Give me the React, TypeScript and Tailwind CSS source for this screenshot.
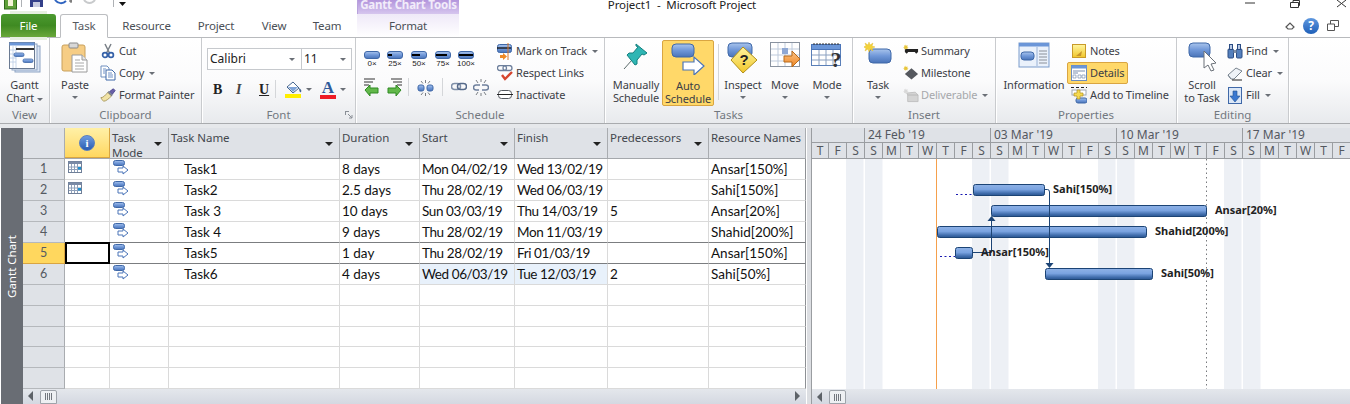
import React from "react";

const UI = "[font-family:'Noto_Sans',sans-serif]";

function Caret({ className = "" }: { className?: string }) {
  return <span className={"inline-block w-0 h-0 border-l-[3px] border-r-[3px] border-t-[3px] border-l-transparent border-r-transparent border-t-[#6a6f76] " + className} />;
}

function Defs() {
  return (
    <svg className="absolute w-0 h-0" aria-hidden="true">
      <defs>
        <linearGradient id="pill" x1="0" y1="0" x2="0" y2="1">
          <stop offset="0" stopColor="#a9c4ec" />
          <stop offset="0.5" stopColor="#6f97d8" />
          <stop offset="1" stopColor="#4a74b8" />
        </linearGradient>
        <linearGradient id="bar" x1="0" y1="0" x2="0" y2="1">
          <stop offset="0" stopColor="#8fb2e6" />
          <stop offset="0.45" stopColor="#7aa3e0" />
          <stop offset="0.8" stopColor="#3f6cab" />
          <stop offset="1" stopColor="#2a5590" />
        </linearGradient>
        <linearGradient id="orangeA" x1="0" y1="0" x2="0" y2="1">
          <stop offset="0" stopColor="#fbc489" />
          <stop offset="1" stopColor="#ee8420" />
        </linearGradient>
        <linearGradient id="yellowD" x1="0" y1="0" x2="0" y2="1">
          <stop offset="0" stopColor="#fff6a0" />
          <stop offset="1" stopColor="#f1c62a" />
        </linearGradient>
      </defs>
    </svg>
  );
}

function Pill({ x, y, w, h, r = 2 }: { x: number; y: number; w: number; h: number; r?: number }) {
  return <rect x={x} y={y} width={w} height={h} rx={r} fill="url(#pill)" stroke="#3f68a8" strokeWidth="0.8" />;
}

function GanttIcon() {
  return (
    <svg width="34" height="32" viewBox="0 0 34 32">
      <rect x="7" y="4" width="25" height="26" fill="#dbe5f4" stroke="#8ea4c4" />
      <rect x="4" y="2" width="25" height="26" fill="#eef3fa" stroke="#8ea4c4" />
      <rect x="1.5" y="0.5" width="25" height="26" fill="#fff" stroke="#6a7a92" />
      <rect x="1.5" y="0.5" width="25" height="3" fill="#6b96d8" />
      <path d="M2 8h6M2 12h6M2 16h6M2 20h6M8 4v22M5 4v22" stroke="#b9cbe4" strokeWidth="0.8" />
      <path d="M8 7h18" stroke="#000" strokeWidth="1.6" />
      <Pill x={6} y={11} w={10} h={3.5} r={1.5} />
      <Pill x={15} y={17} w={10} h={3.5} r={1.5} />
    </svg>
  );
}
function PasteIcon() {
  return (
    <svg width="28" height="32" viewBox="0 0 28 32">
      <rect x="1" y="3" width="23" height="26" rx="2" fill="#f6cd85" stroke="#c8a05c" />
      <rect x="8" y="1" width="9" height="5" rx="1" fill="#d8d8d8" stroke="#8a8a8a" />
      <path d="M11 29V13h10l5 5v12H11z" fill="#fff" stroke="#9a9a9a" />
      <path d="M21 13v5h5" fill="#e6e6e6" stroke="#9a9a9a" />
      <path d="M14 18h5M14 21h9M14 24h9M14 27h9" stroke="#a8a8a8" />
    </svg>
  );
}
function ScissorsIcon() {
  return (
    <svg width="16" height="16" viewBox="0 0 16 16">
      <path d="M5 1l4.5 9M11 1L6.5 10" stroke="#7a8088" strokeWidth="1.5" fill="none" />
      <circle cx="5" cy="12" r="2.4" fill="none" stroke="#3561a8" strokeWidth="1.7" />
      <circle cx="11" cy="12" r="2.4" fill="none" stroke="#3561a8" strokeWidth="1.7" />
    </svg>
  );
}
function CopyIcon() {
  return (
    <svg width="16" height="16" viewBox="0 0 16 16">
      <path d="M1 1h6l2 2v9H1z" fill="#fff" stroke="#6f8fbf" />
      <path d="M6 5h6l3 3v7H6z" fill="#fff" stroke="#3f68a8" />
      <path d="M3 4h3M3 6h2M3 8h2M8 8h4M8 10h5M8 12h5" stroke="#4a74b8" strokeWidth="0.8" />
    </svg>
  );
}
function BrushIcon() {
  return (
    <svg width="18" height="16" viewBox="0 0 18 16">
      <path d="M1 11c3 0 5-3 8-6l4 4c-3 3-6 6-9 6-1-1-2-2-3-4z" fill="#f1e3a6" stroke="#a5955a" />
      <path d="M9 5l4 4 1-1-4-4z" fill="#9a9fae" stroke="#5d6272" />
      <path d="M11 4l4-3 2 2-3 4z" fill="#6a5fa8" stroke="#44408a" />
    </svg>
  );
}
function Bucket() {
  return (
    <svg width="17" height="18" viewBox="0 0 17 18">
      <path d="M2 7l6-5 6 6-6 5z" fill="#fff" stroke="#44658f" />
      <path d="M3 7h10l-5 5z" fill="#7fa4d8" />
      <path d="M14 8c2 1 3 3 2 4s-2-1-2-4z" fill="#44658f" />
      <rect x="0" y="14" width="16" height="4" fill="#ffee00" />
    </svg>
  );
}
function MiniBar({ x, pct, fill }: { x: number; pct: string; fill: number }) {
  return (
    <div className="w-[16px] flex flex-col items-center" style={{ marginLeft: x }}>
      <svg width="16" height="8" viewBox="0 0 16 8">
        <rect x="0.5" y="0.5" width="15" height="7" rx="2.5" fill="url(#pill)" stroke="#3f68a8" />
        {fill > 0 && <rect x="1" y="3" width={fill} height="2" fill="#000" />}
      </svg>
      <span className="text-[8px] leading-[9px] text-[#222] whitespace-nowrap [font-family:'Liberation_Sans',sans-serif]">{pct}</span>
    </div>
  );
}
function IndentOut() {
  return (
    <svg width="16" height="18" viewBox="0 0 16 18">
      <path d="M0 1h11M0 4h9M0 7h5" stroke="#333" />
      <path d="M1 12l5-5v3h8v5H6v3z" fill="#62b84a" stroke="#2f8a22" />
    </svg>
  );
}
function IndentIn() {
  return (
    <svg width="16" height="18" viewBox="0 0 16 18">
      <path d="M5 1h11M7 4h9M11 7h5" stroke="#333" />
      <path d="M15 12l-5-5v3H2v5h8v3z" fill="#62b84a" stroke="#2f8a22" />
    </svg>
  );
}
function SplitIcon() {
  return (
    <svg width="17" height="17" viewBox="0 0 17 17">
      <rect x="1" y="6" width="6" height="6" rx="2" fill="url(#pill)" stroke="#3f68a8" />
      <rect x="10" y="6" width="6" height="6" rx="2" fill="url(#pill)" stroke="#3f68a8" />
      <path d="M8.5 1v3M4 2l2 2.5M13 2l-2 2.5M8.5 14v3M4 16l2-2.5M13 16l-2-2.5" stroke="#5a5f66" strokeWidth="0.8" />
    </svg>
  );
}
function LinkIcon() {
  return (
    <svg width="16" height="10" viewBox="0 0 16 10">
      <rect x="0.5" y="1.5" width="9" height="6" rx="3" fill="none" stroke="#7f8fa8" strokeWidth="1.5" />
      <rect x="6.5" y="1.5" width="9" height="6" rx="3" fill="none" stroke="#566a8a" strokeWidth="1.5" />
    </svg>
  );
}
function UnlinkIcon() {
  return (
    <svg width="16" height="17" viewBox="0 0 16 17">
      <path d="M7 6H3a2.5 2.5 0 0 0 0 5h3M9 6h4a2.5 2.5 0 0 1 0 5H9" fill="none" stroke="#6d7f9c" strokeWidth="1.5" />
      <path d="M8 0v3M3 1l2 3M13 1l-2 3M8 14v3M3 16l2-3M13 16l-2-3" stroke="#5a5f66" strokeWidth="0.8" />
    </svg>
  );
}
function MarkIcon() {
  return (
    <svg width="16" height="17" viewBox="0 0 16 17">
      <rect x="0.5" y="1.5" width="14" height="8" rx="2" fill="url(#pill)" stroke="#3f68a8" />
      <path d="M0 5h14" stroke="#111" strokeWidth="1.3" />
      <path d="M11 0v17" stroke="#d9782a" />
      <path d="M3 12h3v-2l4 3.5-4 3.5v-2H3z" fill="#ef8a26" />
    </svg>
  );
}
function RespectIcon() {
  return (
    <svg width="16" height="17" viewBox="0 0 16 17">
      <rect x="0.5" y="0.5" width="9" height="5" rx="2.5" fill="none" stroke="#6d7f9c" strokeWidth="1.3" />
      <rect x="6" y="0.5" width="9" height="5" rx="2.5" fill="none" stroke="#6d7f9c" strokeWidth="1.3" />
      <path d="M5 10l3 4 7-7" fill="none" stroke="#d6452e" strokeWidth="2.4" />
    </svg>
  );
}
function InactiveIcon() {
  return (
    <svg width="16" height="10" viewBox="0 0 16 10">
      <rect x="1.5" y="0.5" width="13" height="8" rx="3" fill="#fff" stroke="#55595f" />
      <path d="M0 4.5h16" stroke="#222" />
    </svg>
  );
}
function PinIcon() {
  return (
    <svg width="26" height="28" viewBox="0 0 26 28">
      <path d="M1 27l8-9" stroke="#5a6a6a" />
      <path d="M13 2l11 9-3 2-2-1-5 6 0 4-2 1L4 13l2-2 4 0 5-6-2-1z" fill="#2fb6b4" stroke="#14807f" />
    </svg>
  );
}
function AutoIcon() {
  return (
    <svg width="34" height="32" viewBox="0 0 34 32">
      <rect x="1" y="1" width="22" height="13" rx="4" fill="url(#pill)" stroke="#3f68a8" />
      <path d="M12 19h11v-5l10 9-10 9v-5H12z" fill="#fff" stroke="#4a74b8" strokeWidth="1.2" />
    </svg>
  );
}
function InspectIcon() {
  return (
    <svg width="32" height="32" viewBox="0 0 32 32">
      <rect x="1" y="1" width="24" height="14" rx="4" fill="url(#pill)" stroke="#3f68a8" />
      <path d="M16 5l14 13-14 13L4 18z" fill="url(#yellowD)" stroke="#b18f1a" />
      <text x="17" y="23" textAnchor="middle" fontSize="15" fontWeight="700" fill="#222" fontFamily="Liberation Sans">?</text>
    </svg>
  );
}
function MoveIcon() {
  return (
    <svg width="31" height="28" viewBox="0 0 31 28">
      <rect x="0.5" y="0.5" width="29" height="24" fill="#fff" stroke="#8a93a0" />
      <path d="M8 1v23M15 1v23M22 1v23M1 7h28M1 13h28M1 19h28" stroke="#bfcbdc" />
      <rect x="12" y="6" width="6" height="6" fill="#8fa8d4" />
      <path d="M14 14h8v-5l8 8-8 8v-5h-8z" fill="url(#orangeA)" stroke="#b86a1a" />
    </svg>
  );
}
function ModeIcon() {
  return (
    <svg width="32" height="30" viewBox="0 0 32 30">
      <rect x="0.5" y="2.5" width="29" height="21" fill="#fff" stroke="#5a7fb8" />
      <rect x="0.5" y="2.5" width="29" height="5" fill="#6b96d8" stroke="#4a74b8" />
      <path d="M3 1v2M6 1v2M9 1v2M12 1v2M15 1v2M18 1v2M21 1v2M24 1v2M27 1v2" stroke="#333" />
      <path d="M8 8v15M15 8v15M22 8v15M1 13h28M1 18h28" stroke="#8aa0c0" />
      <text x="25" y="25" textAnchor="middle" fontSize="22" fontWeight="700" fill="#333" fontFamily="Liberation Serif">?</text>
    </svg>
  );
}
function TaskIcon() {
  return (
    <svg width="28" height="26" viewBox="0 0 28 26">
      <rect x="5" y="7" width="22" height="14" rx="4" fill="url(#pill)" stroke="#3f68a8" />
      <path d="M5 0l1 3 3-2-1 3 3 1-3 1 1 3-3-2-1 3-1-3-3 2 1-3-3-1 3-1-1-3 3 2z" fill="#f3d23a" stroke="#e0b520" strokeWidth="0.4" />
    </svg>
  );
}
function SummaryIcon() {
  return (
    <svg width="17" height="14" viewBox="0 0 17 14">
      <path d="M2 5h14v3l-2 2-1.5-2H5.5L4 10 2 8z" fill="#222" />
      <path d="M3 0l.5 1.5L5 1l-.5 1.5L6 3l-1.5.5L5 5l-1.5-.5L3 6l-.5-1.5L1 5l.5-1.5L0 3l1.5-.5L1 1l1.5.5z" fill="#e7c53a" />
    </svg>
  );
}
function MilestoneIcon() {
  return (
    <svg width="17" height="16" viewBox="0 0 17 16">
      <path d="M9 3l7 6-7 6-7-6z" fill="#55585e" />
      <path d="M3 0l.5 1.5L5 1l-.5 1.5L6 3l-1.5.5L5 5l-1.5-.5L3 6l-.5-1.5L1 5l.5-1.5L0 3l1.5-.5L1 1l1.5.5z" fill="#e7c53a" />
    </svg>
  );
}
function DeliverableIcon() {
  return (
    <svg width="17" height="16" viewBox="0 0 17 16">
      <path d="M4 6l9-1 3 3v7H5V8z" fill="#d4d4d4" stroke="#c0c0c0" />
      <path d="M5 8h11" stroke="#b8b8b8" />
      <path d="M3 1l.5 1.5L5 2l-.5 1.5L6 4l-1.5.5L5 6l-1.5-.5L3 7l-.5-1.5L1 6l.5-1.5L0 4l1.5-.5L1 2l1.5.5z" fill="#d8d8d8" />
    </svg>
  );
}
function InfoIcon() {
  return (
    <svg width="32" height="27" viewBox="0 0 32 27">
      <rect x="1" y="1" width="30" height="24" fill="#eaf1fb" stroke="#7b9bcb" />
      <rect x="1" y="1" width="30" height="3.5" fill="#6b96d8" />
      <rect x="3" y="10" width="13" height="8" rx="3" fill="url(#pill)" stroke="#3f68a8" />
      <path d="M19 5v19" stroke="#9ab2d6" />
      <path d="M21 9h8M21 12h8M21 15h8M21 18h8M21 21h8" stroke="#8a8f98" />
    </svg>
  );
}
function NotesIcon() {
  return (
    <svg width="14" height="14" viewBox="0 0 14 14">
      <rect x="0.5" y="0.5" width="13" height="13" fill="url(#yellowD)" stroke="#c89a2a" />
      <path d="M4 12l6-5-1 5z" fill="#c8952a" />
    </svg>
  );
}
function DetailsIcon() {
  return (
    <svg width="16" height="16" viewBox="0 0 16 16">
      <rect x="0.5" y="0.5" width="15" height="15" fill="#fff" stroke="#6a8cc0" />
      <rect x="0.5" y="0.5" width="15" height="3" fill="#6b96d8" />
      <path d="M2 6h12M2 8h5" stroke="#7a8fb0" />
      <path d="M7 10h3v3H7zM11 10h3v3h-3zM2 10h3v3H2z" fill="none" stroke="#7a8fb0" strokeWidth="0.7" />
    </svg>
  );
}
function TimelineIcon() {
  return (
    <svg width="16" height="17" viewBox="0 0 16 17">
      <path d="M0 .5h16" stroke="#222" strokeDasharray="3 2" />
      <rect x="1" y="3" width="14" height="5" fill="#fff" stroke="#a0a8b4" />
      <rect x="5" y="11" width="11" height="5" rx="2" fill="url(#pill)" stroke="#3f68a8" />
      <path d="M3 6h3V3h3v3h3v3H9v3H6V9H3z" fill="#f6da50" stroke="#b38f1e" strokeWidth="0.7" />
    </svg>
  );
}
function ScrollIcon() {
  return (
    <svg width="29" height="30" viewBox="0 0 29 30">
      <rect x="1" y="1" width="21" height="14" rx="4" fill="url(#pill)" stroke="#3f68a8" />
      <path d="M16 9v17l4-3 3 6 3-1-3-6 5-1z" fill="#fff" stroke="#6a7078" />
    </svg>
  );
}
function FindIcon() {
  return (
    <svg width="16" height="15" viewBox="0 0 16 15">
      <rect x="1" y="5" width="5.5" height="9" rx="1" fill="#5580bd" stroke="#2a4c84" />
      <rect x="9.5" y="5" width="5.5" height="9" rx="1" fill="#5580bd" stroke="#2a4c84" />
      <rect x="2.5" y="0.5" width="3" height="5" fill="#b9c9e4" stroke="#2a4c84" />
      <rect x="10.5" y="0.5" width="3" height="5" fill="#b9c9e4" stroke="#2a4c84" />
      <rect x="6.5" y="6" width="3" height="3" fill="#7f8fa8" />
    </svg>
  );
}
function ClearIcon() {
  return (
    <svg width="16" height="15" viewBox="0 0 16 15">
      <path d="M1 9l8-7 6 3-8 8H4z" fill="#eef2f7" stroke="#7a8590" />
      <path d="M1 9l3 4" stroke="#7a8590" />
      <path d="M5 14h10" stroke="#222" />
    </svg>
  );
}
function FillIcon() {
  return (
    <svg width="14" height="17" viewBox="0 0 14 17">
      <rect x="0.5" y="0.5" width="13" height="16" fill="#dbe7f7" stroke="#3f68a8" />
      <path d="M5 4h4v5h3l-5 6-5-6h3z" fill="#3a78d0" stroke="#23508f" strokeWidth="0.6" />
    </svg>
  );
}

function Large({ label, icon, w, caret, active, className = "" }: { label: React.ReactNode; icon: React.ReactNode; w: number; caret?: boolean; active?: boolean; className?: string }) {
  return (
    <div
      style={{ width: w }}
      className={"flex flex-col items-center shrink-0 text-[#3c4046] text-[11px] tracking-[-0.1px] leading-[13px] text-center " + (active ? "bg-[#ffd869] border border-[#d9a542] rounded-[2px] mt-[2px] pt-[1px] h-[66px] " : "mt-[3px] h-[66px] ") + className}
    >
      <div className="h-[37px] flex items-start justify-center pt-[1px]">{icon}</div>
      <div className="whitespace-nowrap">{label}</div>
      {caret && <Caret className="mt-[5px]" />}
    </div>
  );
}

function Small({ icon, label, w, caret, disabled, active, gap = 3 }: { icon: React.ReactNode; label: string; w?: number; caret?: boolean; disabled?: boolean; active?: boolean; gap?: number }) {
  return (
    <div
      className={"h-[22px] flex items-center whitespace-nowrap text-[11px] tracking-[-0.15px] " + (disabled ? "text-[#a6a8ab] " : "text-[#3c4046] ") + (active ? "bg-[#ffd869] border border-[#d9a542] rounded-[2px] -ml-[4px] pl-[3px] w-[61px] " : "")}
      style={w ? { width: w } : undefined}
    >
      <span className="flex justify-center items-center w-[16px] h-[17px] shrink-0">{icon}</span>
      <span style={{ marginLeft: gap }}>{label}</span>
      {caret && <Caret className="ml-[5px]" />}
    </div>
  );
}

function Group({ w, label, children, launcher }: { w: number; label: string; children: React.ReactNode; launcher?: boolean }) {
  return (
    <div style={{ width: w }} className="shrink-0 flex flex-col h-[85px] border-r border-r-[#c9cbce] shadow-[1px_0_0_#ffffff]">
      <div className="h-[69px] flex">{children}</div>
      <div className="h-[16px] relative flex items-center justify-center text-[11.5px] leading-[16px] text-[#72787f] pb-[1px]">
        {label}
        {launcher && (
          <svg className="absolute right-[2px] top-[4px]" width="8" height="8" viewBox="0 0 8 8">
            <path d="M0 .5h4M.5 0v4M3 3l4 4M7 4v3H4" stroke="#8a8f96" fill="none" />
          </svg>
        )}
      </div>
    </div>
  );
}

function Ribbon() {
  return (
    <div className="h-[86px] flex border-b border-b-[#a9abae] bg-linear-to-b from-white via-[#fbfbfc] to-[#e8eaed]">
      <Group w={50} label="View">
        <Large w={49} label={<>Gantt<br />Chart <Caret className="align-middle" /></>} icon={<GanttIcon />} />
      </Group>
      <Group w={152} label="Clipboard">
        <Large w={50} label="Paste" icon={<PasteIcon />} caret />
        <div className="flex flex-col pt-[2px]">
          <Small icon={<ScissorsIcon />} label="Cut" />
          <Small icon={<CopyIcon />} label="Copy" caret />
          <Small icon={<BrushIcon />} label="Format Painter" />
        </div>
      </Group>
      <Group w={154} label="Font" launcher>
        <div className="flex flex-col pl-[5px] pt-[10px]">
          <div className="flex h-[22px] border border-[#c6c9cd] bg-white w-[145px] text-[12px] text-[#222]">
            <div className="w-[94px] border-r border-r-[#c6c9cd] flex items-center justify-between pl-[2px] pr-[6px]">Calibri<Caret /></div>
            <div className="flex-1 flex items-center justify-between pl-[2px] pr-[5px]">11<Caret /></div>
          </div>
          <div className="flex items-center h-[22px] mt-[8px] text-[#222]">
            <span className="w-[11px] ml-[6px] [font-family:'Liberation_Serif',serif] font-bold text-[14px]">B</span>
            <span className="w-[11px] ml-[12px] [font-family:'Liberation_Serif',serif] font-bold italic text-[14px] text-[#444]">I</span>
            <span className="w-[11px] ml-[12px] [font-family:'Liberation_Serif',serif] font-bold underline text-[14px]">U</span>
            <span className="w-px h-[18px] bg-[#d4d6d9] ml-[5px]" />
            <span className="ml-[9px] flex"><Bucket /></span>
            <Caret className="ml-[4px]" />
            <span className="ml-[8px] w-[16px] flex flex-col items-center">
              <span className="[font-family:'Liberation_Serif',serif] font-bold text-[17px] leading-[15px] text-[#2f5a9a]">A</span>
              <span className="w-[16px] h-[4px] bg-[#ee1c25]" />
            </span>
            <Caret className="ml-[4px]" />
          </div>
        </div>
      </Group>
      <Group w={249} label="Schedule">
        <div className="flex flex-col w-[141px] pl-[8px] pt-[13px]">
          <div className="flex h-[19px]">
            <MiniBar x={0} pct="0×" fill={0} />
            <MiniBar x={7} pct="25×" fill={4} />
            <MiniBar x={8} pct="50×" fill={8} />
            <MiniBar x={8} pct="75×" fill={11} />
            <MiniBar x={7} pct="100×" fill={14} />
          </div>
          <div className="flex items-center h-[20px] mt-[7px]">
            <IndentOut />
            <span className="ml-[6px]"><IndentIn /></span>
            <span className="w-px h-[18px] bg-[#d4d6d9] ml-[6px]" />
            <span className="ml-[8px]"><SplitIcon /></span>
            <span className="w-px h-[18px] bg-[#d4d6d9] ml-[8px]" />
            <span className="ml-[8px]"><LinkIcon /></span>
            <span className="ml-[6px]"><UnlinkIcon /></span>
          </div>
        </div>
        <div className="flex flex-col pt-[2px]">
          <Small icon={<MarkIcon />} label="Mark on Track" caret />
          <Small icon={<RespectIcon />} label="Respect Links" />
          <Small icon={<InactiveIcon />} label="Inactivate" />
        </div>
      </Group>
      <Group w={248} label="Tasks">
        <Large w={57} className="pl-[5px]" label={<>Manually<br />Schedule</>} icon={<PinIcon />} />
        <Large w={52} active label={<>Auto<br />Schedule</>} icon={<AutoIcon />} />
        <div className="w-px h-[56px] bg-[#d4d6d9] mt-[6px] ml-[4px] mr-[3px]" />
        <Large w={42} label="Inspect" icon={<InspectIcon />} caret />
        <Large w={42} label="Move" icon={<MoveIcon />} caret />
        <Large w={42} label="Mode" icon={<ModeIcon />} caret />
      </Group>
      <Group w={143} label="Insert">
        <Large w={50} label="Task" icon={<TaskIcon />} caret />
        <div className="flex flex-col pt-[2px]">
          <Small icon={<SummaryIcon />} label="Summary" gap={2} />
          <Small icon={<MilestoneIcon />} label="Milestone" gap={2} />
          <Small icon={<DeliverableIcon />} label="Deliverable" gap={2} caret disabled />
        </div>
      </Group>
      <Group w={181} label="Properties">
        <Large w={71} className="pl-[5px]" label="Information" icon={<InfoIcon />} />
        <div className="flex flex-col pt-[2px] pl-[4px]">
          <Small icon={<NotesIcon />} label="Notes" />
          <Small icon={<DetailsIcon />} label="Details" active />
          <Small icon={<TimelineIcon />} label="Add to Timeline" />
        </div>
      </Group>
      <Group w={112} label="Editing">
        <Large w={50} label={<>Scroll<br />to Task</>} icon={<ScrollIcon />} />
        <div className="flex flex-col pt-[2px]">
          <Small icon={<FindIcon />} label="Find" caret />
          <Small icon={<ClearIcon />} label="Clear" caret />
          <Small icon={<FillIcon />} label="Fill" caret />
        </div>
      </Group>
    </div>
  );
}

function Top() {
  return (
    <>
      <div className="h-[14px] flex overflow-hidden relative bg-white">
        <div className="w-[357px] shrink-0 flex items-start">
          <svg width="140" height="14" viewBox="0 0 140 14">
            <rect x="4.5" y="-3" width="12" height="12" fill="#5fa03a" stroke="#2f6a1a" />
            <rect x="8" y="-2" width="5" height="8" fill="#f4f4d8" />
            <path d="M21.5 0v7" stroke="#aeb1b5" />
            <rect x="30" y="-4" width="13" height="11" fill="#34408a" />
            <rect x="33" y="2" width="7" height="5" fill="#c8cbe0" />
            <path d="M55 0c3 4 8 4 11 1" fill="none" stroke="#2f64c0" strokeWidth="2" />
            <path d="M69 1l3 0M71 0v3" stroke="#555" />
            <path d="M84 0c3 4 8 4 11 0" fill="none" stroke="#c8cacc" strokeWidth="2" />
            <path d="M113.5 0v7" stroke="#aeb1b5" />
            <path d="M119 2h7l-3.5 4z" fill="#111" />
          </svg>
        </div>
        <div className="w-[102px] shrink-0 h-[14px] overflow-hidden bg-linear-to-b from-[#b395dc] to-[#d6c6ee] border-l border-l-[#b9a3dd] flex justify-center">
          <span className="text-[11.5px] font-bold text-[#f2ecfa] leading-[9px] whitespace-nowrap tracking-[-0.2px]">Gantt Chart Tools</span>
        </div>
        <div className="flex-1 relative h-[14px]">
          <div className="w-[300px] ml-[73px] text-center text-[11.5px] tracking-[-0.1px] leading-[11px] text-[#222] -mt-[1px] whitespace-pre">Project1  -  Microsoft Project</div>
        </div>
        <svg className="absolute right-0 top-0" width="110" height="10" viewBox="0 0 110 10">
          <path d="M5 3h10" stroke="#333" />
          <path d="M50.5 2.5h8v5h-8zM53 2V.5h6.5v5H59" fill="none" stroke="#333" />
          <path d="M97 0l9 7M106 0l-9 7" stroke="#333" />
        </svg>
      </div>
      <div className="h-[24px] flex relative text-[11.5px] tracking-[-0.15px] text-[#4a4f56] border-b border-b-[#b8babd] whitespace-nowrap">
        <div className="ml-[1px] w-[55px] h-[23px] relative flex items-center justify-center text-white rounded-t-[3px] bg-linear-to-b from-[#4c9a30] via-[#3f8a22] to-[#69a83a] z-20">
          File
          <span className="absolute left-[9px] -top-[3px] w-[37px] h-[3px] bg-[#e6efe0]" />
          <span className="absolute left-[9px] -bottom-[3px] w-[37px] h-[3px] bg-[#e6efe0]" />
        </div>
        <div className="ml-[4px] w-[48px] h-[24px] bg-white border border-[#bcbec1] border-b-white rounded-t-[3px] flex items-center justify-center z-10 text-[#55595f]">Task</div>
        <div className="w-[63px] text-center leading-[23px] ml-[7px]">Resource</div>
        <div className="w-[44px] text-center leading-[23px] ml-[16px]">Project</div>
        <div className="w-[34px] text-center leading-[23px] ml-[19px]">View</div>
        <div className="w-[36px] text-center leading-[23px] ml-[18px]">Team</div>
        <div className="w-[102px] text-center leading-[23px] ml-[12px] bg-linear-to-b from-[#efe9f8] to-white">Format</div>
        <div className="flex-1" />
        <div className="flex items-center mr-[11px]">
          <svg width="10" height="8" viewBox="0 0 10 8"><path d="M1 5l4-4 4 4-2 2H3z" fill="none" stroke="#555" strokeWidth="1.2" /></svg>
          <span className="ml-[8px] w-[16px] h-[16px] rounded-full bg-linear-to-b from-[#5f98df] to-[#1d5fb8] text-white font-bold text-[12px] leading-[16px] text-center">?</span>
          <svg className="ml-[8px]" width="12" height="11" viewBox="0 0 12 11"><path d="M.5 4h7v6.5h-7zM3.5 4V.5h8v6H8" fill="none" stroke="#555" /></svg>
        </div>
      </div>
    </>
  );
}

const cols = [45, 59, 171, 80, 95, 93, 101, 97];
const rows: [boolean, string, string, string, string, string, string][] = [
  [true, "Task1", "8 days", "Mon 04/02/19", "Wed 13/02/19", "", "Ansar[150%]"],
  [true, "Task2", "2.5 days", "Thu 28/02/19", "Wed 06/03/19", "", "Sahi[150%]"],
  [false, "Task 3", "10 days", "Sun 03/03/19", "Thu 14/03/19", "5", "Ansar[20%]"],
  [false, "Task 4", "9 days", "Thu 28/02/19", "Mon 11/03/19", "", "Shahid[200%]"],
  [false, "Task5", "1 day", "Thu 28/02/19", "Fri 01/03/19", "", "Ansar[150%]"],
  [false, "Task6", "4 days", "Wed 06/03/19", "Tue 12/03/19", "2", "Sahi[50%]"],
];

function FilterArrow() {
  return <span className="absolute right-[6px] bottom-[12px] w-0 h-0 border-l-[4px] border-r-[4px] border-t-[4px] border-l-transparent border-r-transparent border-t-[#222]" />;
}

function HeaderCell({ w, children, arrow = true }: { w: number; children: React.ReactNode; arrow?: boolean }) {
  return (
    <div style={{ width: w }} className="relative shrink-0 h-full border-r border-r-[#a9acb0] pl-[2px] pt-[2px] text-[11.5px] tracking-[-0.05px] leading-[15px] text-[#44484e]">
      {children}
      {arrow && <FilterArrow />}
    </div>
  );
}

function CalIcon() {
  return (
    <svg width="14" height="12" viewBox="0 0 14 12">
      <rect x="0.5" y="0.5" width="13" height="11" fill="#fff" stroke="#6f7f98" />
      <rect x="0.5" y="0.5" width="13" height="2.5" fill="#7a8aa6" />
      <path d="M3.5 3v8M6.5 3v8M9.5 3v8M1 6h12M1 8.5h12" stroke="#8fa0ba" />
      <rect x="10" y="6" width="3" height="2.5" fill="#1a8fd0" />
    </svg>
  );
}
function ModeCell() {
  return (
    <svg width="16" height="15" viewBox="0 0 16 15">
      <rect x="0.5" y="0.5" width="11" height="5" rx="2" fill="url(#pill)" stroke="#3f68a8" />
      <path d="M5 8h5V6l5 4-5 4v-2H5z" fill="#fff" stroke="#4a74b8" />
    </svg>
  );
}

function Table() {
  const blank = Array.from({ length: 5 });
  return (
    <div className="w-[783px] shrink-0 flex flex-col">
      <div className="flex h-[31px] bg-[#dfe2e7] border-b border-b-[#a5a8ac] [font-family:'Noto_Sans',sans-serif]">
        <div className="w-[42px] shrink-0 border-r border-r-[#a9acb0]" />
        <div className="w-[45px] shrink-0 border-r border-r-[#d9a542] border-b border-b-[#d9a542] bg-linear-to-b from-[#fff0a6] to-[#ffd75e] flex items-center justify-center">
          <span className="w-[16px] h-[16px] rounded-full bg-linear-to-b from-[#6f9ce0] to-[#2a5cb0] border border-[#5a7fbe] text-white font-bold text-[11px] leading-[14px] text-center [font-family:'Liberation_Serif',serif]">i</span>
        </div>
        <HeaderCell w={cols[1]}>Task<br />Mode</HeaderCell>
        <HeaderCell w={cols[2]}>Task Name</HeaderCell>
        <HeaderCell w={cols[3]}>Duration</HeaderCell>
        <HeaderCell w={cols[4]}>Start</HeaderCell>
        <HeaderCell w={cols[5]}>Finish</HeaderCell>
        <HeaderCell w={cols[6]}>Predecessors</HeaderCell>
        <HeaderCell w={cols[7]} arrow={false}><span className="whitespace-nowrap">Resource Names</span></HeaderCell>
      </div>
      {rows.map((r, i) => {
        const sel = i === 4;
        const lineCls = sel || i === 3 ? "border-b border-b-[#7b7d80]" : "border-b border-b-[#dadada]";
        const tint = i === 5 ? "bg-[#e8f1fb]" : "";
        return (
          <div key={i} className="flex h-[21px] text-[13.5px] text-[#111] [font-family:'Lato',sans-serif]">
            <div className={"w-[42px] shrink-0 flex items-center justify-center text-[12.5px] text-[#555a62] border-r " + (sel ? "bg-[#ffd75e] border-r-[#d9a542] border-b border-b-[#d9a542]" : "bg-[#dfe2e7] border-r-[#a9acb0] border-b border-b-[#b5b8bc]")}>{i + 1}</div>
            <div style={{ width: cols[0] }} className={"shrink-0 pl-[3px] pt-[2px] " + (sel ? "border-2 border-black -mt-[1px] h-[22px]" : "border-r border-r-[#dadada] " + lineCls)}>
              {r[0] && <CalIcon />}
            </div>
            <div style={{ width: cols[1] }} className={"shrink-0 pl-[3px] pt-[1px] border-r border-r-[#dadada] " + lineCls}><ModeCell /></div>
            <div style={{ width: cols[2] }} className={"shrink-0 pl-[15px] flex items-center border-r border-r-[#dadada] " + lineCls}>{r[1]}</div>
            <div style={{ width: cols[3] }} className={"shrink-0 pl-[2px] flex items-center border-r border-r-[#dadada] " + lineCls}>{r[2]}</div>
            <div style={{ width: cols[4] }} className={"shrink-0 pl-[2px] flex items-center border-r border-r-[#dadada] whitespace-nowrap tracking-[-0.4px] " + tint + " " + lineCls}>{r[3]}</div>
            <div style={{ width: cols[5] }} className={"shrink-0 pl-[2px] flex items-center border-r border-r-[#dadada] whitespace-nowrap tracking-[-0.4px] " + tint + " " + lineCls}>{r[4]}</div>
            <div style={{ width: cols[6] }} className={"shrink-0 pl-[2px] flex items-center border-r border-r-[#dadada] " + lineCls}>{r[5]}</div>
            <div style={{ width: cols[7] }} className={"shrink-0 pl-[2px] flex items-center border-r border-r-[#8d9094] whitespace-nowrap " + lineCls}>{r[6]}</div>
          </div>
        );
      })}
      {blank.map((_, i) => (
        <div key={i} className="flex h-[21px]">
          <div className="w-[42px] shrink-0 bg-[#dfe2e7] border-r border-r-[#a9acb0] border-b border-b-[#b5b8bc]" />
          {cols.map((c, j) => (
            <div key={j} style={{ width: c }} className={"shrink-0 border-b border-b-[#dadada] border-r " + (j === 7 ? "border-r-[#8d9094]" : "border-r-[#dadada]")} />
          ))}
        </div>
      ))}
      <ScrollBar arrowRight />
    </div>
  );
}

function ScrollBar({ arrowRight, offset = 0 }: { arrowRight?: boolean; offset?: number }) {
  return (
    <div className="h-[15px] flex items-center bg-linear-to-b from-[#e4e7ec] to-[#d4d8e1] relative" style={{ paddingLeft: offset }}>
      <span className="ml-[5px] w-0 h-0 border-y-[5px] border-r-[5px] border-y-transparent border-r-[#5d6268]" />
      <span className="ml-[7px] w-[17px] h-[14px] mt-[1px] border border-[#9ea3aa] rounded-t-[2px] bg-[#eef0f3] flex items-center justify-center gap-[1px]">
        <span className="w-px h-[7px] bg-[#72777e]" />
        <span className="w-px h-[7px] bg-[#72777e]" />
        <span className="w-px h-[7px] bg-[#72777e]" />
        <span className="w-px h-[7px] bg-[#72777e]" />
      </span>
      <span className="flex-1" />
      {arrowRight && <span className="mr-[6px] w-0 h-0 border-y-[5px] border-l-[5px] border-y-transparent border-l-[#5d6268]" />}
    </div>
  );
}

const days = "TFSSMTWTFSSMTWTFSSMTWTFSSMTWTF".split("");

function GBar({ x, y, w }: { x: number; y: number; w: number }) {
  return <rect x={x} y={y} width={w} height={11} rx={2} fill="url(#bar)" stroke="#1c4475" strokeWidth="1" />;
}

function Chart() {
  const stripes = [846, 865, 972, 991, 1098, 1117, 1224, 1243];
  const labels: [number, number, string][] = [
    [1053, 189, "Sahi[150%]"],
    [1215, 210, "Ansar[20%]"],
    [1155, 231, "Shahid[200%]"],
    [981, 252, "Ansar[150%]"],
    [1161, 273, "Sahi[50%]"],
  ];
  return (
    <div className="flex-1 flex flex-col min-w-0 border-l border-l-[#9a9da1]">
      <div className="h-[15px] flex bg-[#dfe2e7] border-b border-b-[#9a9da1] text-[12px] leading-[14px] text-[#54585f]">
        <div className="w-[53px] shrink-0 border-r border-r-[#9a9da1]" />
        {["24 Feb '19", "03 Mar '19", "10 Mar '19"].map((t) => (
          <div key={t} className="w-[126px] shrink-0 pl-[3px] border-r border-r-[#9a9da1]">{t}</div>
        ))}
        <div className="flex-1 pl-[3px] whitespace-nowrap">17 Mar '19</div>
      </div>
      <div className="h-[16px] flex bg-[#dfe2e7] border-b border-b-[#9a9da1] text-[12px] leading-[15px] text-[#54585f] overflow-hidden">
        {days.map((d, i) => (
          <div key={i} className={"shrink-0 text-center border-r border-r-[#9a9da1] " + (i === 0 ? "w-[17px]" : "w-[18px]")}>{d}</div>
        ))}
      </div>
      <svg className="block" width="538" height="230" viewBox="812 159 538 230">
        {stripes.map((x) => (
          <rect key={x} x={x} y={159} width={17.5} height={230} fill="#edf0f5" />
        ))}
        <rect x={936} y={159} width={1} height={230} fill="#f5a04c" />
        <path d="M1206.5 159V389" stroke="#77797d" strokeDasharray="1.5 3" />
        <path d="M956 194.5H973M940 256.5H955" stroke="#1818b0" strokeDasharray="2 2.5" />
        <GBar x={973.5} y={184.5} w={71} />
        <GBar x={991.5} y={205.5} w={215} />
        <GBar x={937.5} y={226.5} w={209} />
        <GBar x={955.5} y={247.5} w={17} />
        <GBar x={1045.5} y={268.5} w={107} />
        <path d="M1045 189.5H1047.5Q1049.5 189.5 1049.5 192V265" fill="none" stroke="#1c4475" />
        <path d="M1045.5 263H1053.5L1049.5 268z" fill="#1c4475" />
        <path d="M973 252.5H991.5V220" fill="none" stroke="#1c4475" />
        <path d="M987.5 221H995.5L991.5 216z" fill="#1c4475" />
        {labels.map(([x, y, t]) => (
          <text key={t + x} x={x} y={y + 4} fontSize="11" fontWeight="700" fill="#222" fontFamily="Noto Sans">{t}</text>
        ))}
      </svg>
      <ScrollBar offset={0} />
    </div>
  );
}

export default function App() {
  return (
    <div className={"w-[1350px] h-[404px] overflow-hidden bg-white relative flex flex-col " + UI}>
      <Defs />
      <Top />
      <Ribbon />
      <div className="h-[4px] bg-[#e6e8eb]" />
      <div className="flex h-[276px] bg-white">
        <div className="w-[1px] shrink-0 bg-white" />
        <div className="w-[22px] shrink-0 bg-[#696d74] flex items-center justify-center">
          <span className="[writing-mode:vertical-rl] rotate-180 text-white text-[11.5px] whitespace-nowrap">Gantt Chart</span>
        </div>
        <Table />
        <div className="w-[5px] shrink-0 bg-[#dcdee2] border-l border-l-white" />
        <Chart />
      </div>
    </div>
  );
}
